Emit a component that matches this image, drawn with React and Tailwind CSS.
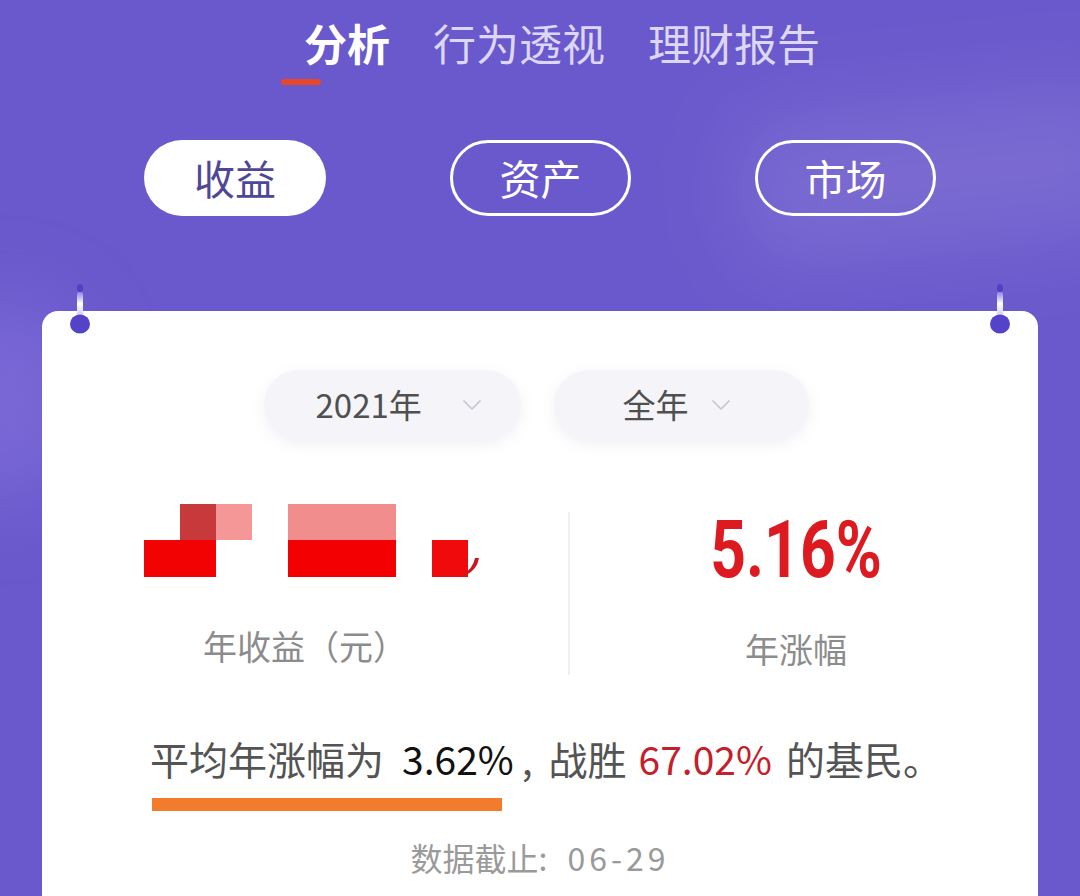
import { ChevronDown } from 'lucide-react';

const tabs = ['分析', '行为透视', '理财报告'];
const pills = [
  { label: '收益', active: true },
  { label: '资产' },
  { label: '市场' },
];

const cjk = { fontFamily: '"Noto Sans CJK SC", "Noto Sans", sans-serif' };

function Pin() {
  return (
    <svg width="24" height="54" viewBox="0 0 24 54" className="block">
      <defs>
        <linearGradient id="pinBar" x1="0" y1="0" x2="0" y2="1">
          <stop offset="0" stopColor="#8f82e0" />
          <stop offset="0.45" stopColor="#ffffff" />
          <stop offset="1" stopColor="#c9c1f5" />
        </linearGradient>
      </defs>
      <ellipse cx="12" cy="5" rx="3" ry="4" fill="#5240c4" />
      <rect x="9" y="9" width="6" height="26" rx="2" fill="url(#pinBar)" />
      <ellipse cx="12" cy="41" rx="10" ry="9.5" fill="#5443c9" />
    </svg>
  );
}

function Mosaic() {
  return (
    <svg width="336" height="74" viewBox="0 0 336 74" className="block">
      <rect x="36" y="0" width="36" height="36" fill="#c8393b" />
      <rect x="72" y="0" width="36" height="36" fill="#f69797" />
      <rect x="0" y="36" width="72" height="37" fill="#f20203" />
      <rect x="144" y="0" width="108" height="36" fill="#f28d8d" />
      <rect x="144" y="36" width="108" height="37" fill="#f30102" />
      <rect x="288" y="36" width="36" height="37" fill="#f00a0b" />
      <path d="M322 71 Q333 66 335 54 L331 54 Q329 65 318 71 Z" fill="#c8181c" />
    </svg>
  );
}

export default function App() {
  return (
    <div
      className="relative h-[896px] w-[1080px] overflow-hidden bg-[#6a59cc]"
      style={cjk}
    >
      {/* soft background light */}
      <div className="absolute right-[-60px] top-[100px] h-[150px] w-[400px] -rotate-6 rounded-[40px] bg-white/10 blur-2xl" />
      <div className="absolute left-[-80px] top-[300px] h-[200px] w-[160px] rounded-full bg-[#8a78e0]/50 blur-2xl" />

      <div className="relative">
        {/* Top tabs */}
        <div className="flex items-start pl-[304px] pt-[12px] gap-[43px]">
          {tabs.map((t, i) => (
            <div key={t} className="relative">
              <span
                className={`text-[43px] leading-[60px] ${
                  i === 0 ? 'font-bold text-white' : 'font-normal text-[#dcd6f7]'
                }`}
              >
                {t}
              </span>
              {i === 0 && (
                <div className="absolute left-[-23px] top-[67px] h-[6px] w-[40px] rounded-full bg-[#e9462a]" />
              )}
            </div>
          ))}
        </div>

        {/* Segment pills */}
        <div className="flex gap-[124px] pl-[144px] mt-[68px]">
          {pills.map((p) =>
            p.active ? (
              <div
                key={p.label}
                className="flex h-[76px] w-[182px] items-center justify-center rounded-full bg-white text-[41px] text-[#4e4796]"
              >
                {p.label}
              </div>
            ) : (
              <div
                key={p.label}
                className="flex h-[76px] w-[181px] items-center justify-center rounded-full border-[3px] border-white text-[41px] text-white"
              >
                {p.label}
              </div>
            )
          )}
        </div>

        {/* Card */}
        <div className="relative mx-[42px] mt-[95px] h-[640px] rounded-t-[16px] bg-white">
          <div className="absolute left-[26px] top-[-28px]">
            <Pin />
          </div>
          <div className="absolute right-[26px] top-[-28px]">
            <Pin />
          </div>

          <div className="flex justify-center gap-[33px] pt-[59px] pr-[8px]">
            <div className="flex items-center h-[70px] w-[257px] pl-[52px] gap-[34px] rounded-full bg-[#f5f5f9] shadow-[0_4px_14px_rgba(120,120,160,0.10)]">
              <span className="text-[33px] text-[#505050]">2021年</span>
              <ChevronDown className="w-8 h-8 text-[#c6c6cf]" strokeWidth={1.3} />
            </div>
            <div className="flex items-center h-[70px] w-[255px] pl-[69px] gap-[16px] rounded-full bg-[#f5f5f9] shadow-[0_4px_14px_rgba(120,120,160,0.10)]">
              <span className="text-[33px] text-[#505050]">全年</span>
              <ChevronDown className="w-8 h-8 text-[#c6c6cf]" strokeWidth={1.3} />
            </div>
          </div>

          <div className="mt-[64px] flex">
            <div className="flex w-[526px] flex-col items-center">
              <div className="pl-[14px]">
                <Mosaic />
              </div>
              <div className="mt-[46px] text-[34px] leading-[44px] text-[#8c8c8c]">
                年收益（元）
              </div>
            </div>
            <div className="mt-[8px] h-[163px] w-[2px] bg-[#f0f0f2]" />
            <div className="flex flex-1 flex-col items-center pr-[16px]">
              <div
                className="mt-[9px] inline-block h-[74px] origin-center scale-x-[0.78] text-[80px] font-bold leading-[74px] text-[#dd1a20]"
                style={{ fontFamily: 'Roboto, "Liberation Sans", sans-serif' }}
              >
                5.16%
              </div>
              <div className="mt-[40px] text-[34px] leading-[44px] text-[#8c8c8c]">
                年涨幅
              </div>
            </div>
          </div>

          <div className="mt-[58px] pl-[108px]">
            <div className="flex text-[39px] leading-[50px] text-[#545454] whitespace-nowrap">
              <span>平均年涨幅为</span>
              <span className="ml-[18px] text-[#111111]">3.62%</span>
              <span className="ml-[8px]">,</span>
              <span className="ml-[16px]">战胜</span>
              <span className="ml-[12px] text-[#c41f2c]">67.02%</span>
              <span className="ml-[14px]">的基民。</span>
            </div>
            <div className="mt-[15px] ml-[2px] h-[13px] w-[350px] bg-[#f27b2c]" />
          </div>

          <div className="mt-[26px] flex justify-center text-[32px] leading-[40px] text-[#9a9a9a]">
            <span>数据截止:</span>
            <span className="ml-[20px] tracking-[4px]">06-29</span>
          </div>
        </div>
      </div>
    </div>
  );
}
